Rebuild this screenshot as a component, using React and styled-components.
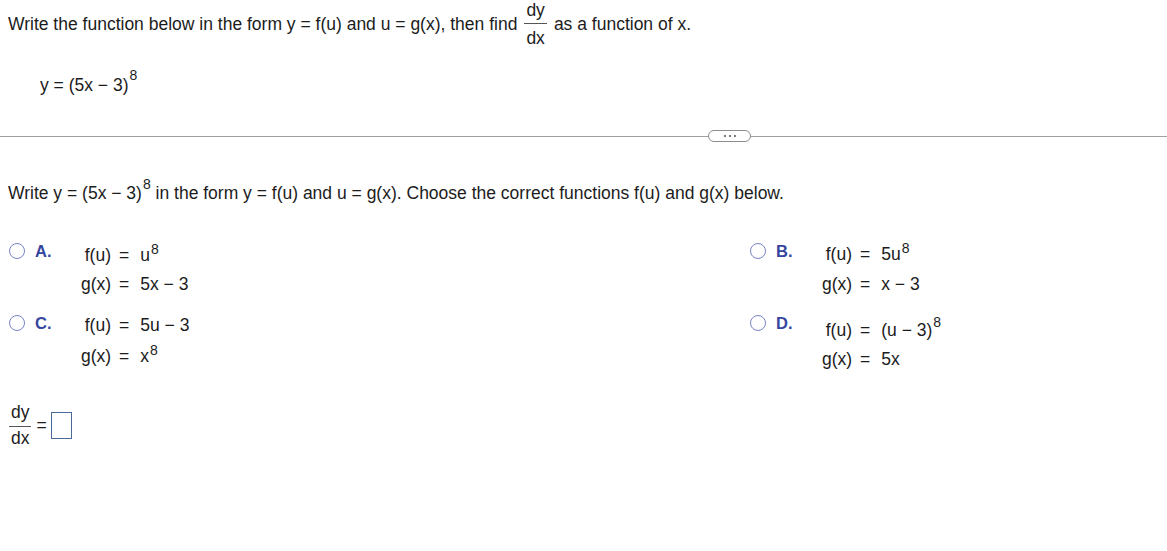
import React from "react";
import styled, { createGlobalStyle } from "styled-components";

const GlobalStyle = createGlobalStyle`
  html, body {
    margin: 0;
    padding: 0;
    background: #ffffff;
  }
  body {
    font-family: "Liberation Sans", Arial, sans-serif;
    font-size: 17.5px;
    color: #1c1c1c;
  }
`;

// top = offset of the f(u) line under the radio, gap = space between f and g lines
const getOptions = () => [
  { key: "A", top: 2, gap: 9, f: <>u<Sup>8</Sup></>, g: <>5x − 3</> },
  { key: "B", top: 1, gap: 10, f: <>5u<Sup>8</Sup></>, g: <>x − 3</> },
  { key: "C", top: 0, gap: 11, f: <>5u − 3</>, g: <>x<Sup>8</Sup></> },
  { key: "D", top: 5, gap: 9, f: <>(u − 3)<Sup $lift={9}>8</Sup></>, g: <>5x</> },
];

function Fraction({ top, bottom, small }) {
  return (
    <Frac>
      <FracTop $small={small}>{top}</FracTop>
      <FracBottom $small={small}>{bottom}</FracBottom>
    </Frac>
  );
}

const App = () => {
  const options = getOptions();
  return (
    <>
      <GlobalStyle />
      <Page>
        <Header>
          <Line>
            <span>Write the function below in the form y = f(u) and u = g(x), then find</span>
            <Fraction top="dy" bottom="dx" />
            <span>as a function of x.</span>
          </Line>
          <Given>
            y = (5x − 3)<Sup $lift={11}>8</Sup>
          </Given>
        </Header>

        <Divider>
          <Rule $w={708} />
          <MoreButton>
            <Dot />
            <Dot />
            <Dot />
          </MoreButton>
          <Rule />
        </Divider>

        <Body>
          <Prompt>
            Write y = (5x − 3)<Sup $lift={10}>8</Sup> in the form y = f(u) and u = g(x). Choose
            the correct functions f(u) and g(x) below.
          </Prompt>

          <Choices>
            {options.map((o) => (
              <Choice key={o.key}>
                <Radio />
                <Letter>{o.key}.</Letter>
                <Eqs $top={o.top} $gap={o.gap}>
                  <Lhs>f(u)</Lhs>
                  <Eq>=</Eq>
                  <Rhs>{o.f}</Rhs>
                  <Lhs>g(x)</Lhs>
                  <Eq>=</Eq>
                  <Rhs>{o.g}</Rhs>
                </Eqs>
              </Choice>
            ))}
          </Choices>

          <Answer>
            <Fraction top="dy" bottom="dx" small />
            <AnswerEq>=</AnswerEq>
            <AnswerBox />
          </Answer>
        </Body>
      </Page>
    </>
  );
};
export default App;

const Page = styled.div`
  width: 1167px;
  height: 551px;
  overflow: hidden;
`;

const Header = styled.div`
  padding: 0 0 0 8px;
`;

const Line = styled.div`
  display: flex;
  align-items: center;
  gap: 7px;
  height: 48px;
  white-space: nowrap;
`;

const Frac = styled.span`
  display: inline-flex;
  flex-direction: column;
  align-items: center;
  line-height: 20px;
`;

const FracTop = styled.span`
  padding: 0 2px ${(p) => (p.$small ? "4px" : "3px")};
  border-bottom: 1px solid #555;
`;

const FracBottom = styled.span`
  padding: ${(p) => (p.$small ? "1px" : "4px")} 2px 0;
`;

const Sup = styled.sup`
  font-size: 14px;
  vertical-align: ${(p) => p.$lift || 7}px;
  line-height: 0;
  margin-left: 1px;
`;

const Given = styled.div`
  margin-top: 27px;
  padding-left: 32px;
  line-height: 20px;
`;

const Divider = styled.div`
  display: flex;
  align-items: center;
  margin-top: 35px;
`;

const Rule = styled.div`
  flex: ${(p) => (p.$w ? `0 0 ${p.$w}px` : "1")};
  height: 1px;
  background: #a0a0a0;
`;

const MoreButton = styled.div`
  width: 41px;
  height: 10px;
  border: 1px solid #8c8c8c;
  border-radius: 6px;
  display: flex;
  align-items: center;
  justify-content: center;
  gap: 3px;
  background: #fff;
`;

const Dot = styled.span`
  width: 2px;
  height: 2px;
  background: #505050;
  border-radius: 1px;
`;

const Body = styled.div`
  padding: 0 0 0 8px;
`;

const Prompt = styled.div`
  margin-top: 41px;
  line-height: 20px;
  white-space: nowrap;
`;

const Choices = styled.div`
  display: grid;
  grid-template-columns: 741px 1fr;
  grid-auto-rows: 72px;
  margin-top: 40px;
`;

const Choice = styled.div`
  display: flex;
  align-items: flex-start;
`;

const Radio = styled.span`
  width: 14px;
  height: 14px;
  border: 1.7px solid #7884c6;
  border-radius: 50%;
  margin: 0 0 0 1px;
  flex-shrink: 0;
`;

const Letter = styled.span`
  color: #3646a0;
  font-weight: bold;
  font-size: 16.5px;
  line-height: 17px;
  margin-left: 10px;
  width: 46px;
  flex-shrink: 0;
`;

const Eqs = styled.div`
  display: grid;
  grid-template-columns: 30px auto auto;
  column-gap: 8px;
  row-gap: ${(p) => p.$gap}px;
  padding-top: ${(p) => p.$top}px;
`;

const Lhs = styled.span`
  text-align: right;
  line-height: 20px;
  white-space: nowrap;
`;

const Eq = styled.span`
  line-height: 20px;
  margin-right: 3px;
`;

const Rhs = styled.span`
  line-height: 20px;
  white-space: nowrap;
`;

const Answer = styled.div`
  display: flex;
  align-items: center;
  margin-top: 15px;
  margin-left: 1px;
`;

const AnswerEq = styled.span`
  margin: 0 4px 0 5px;
`;

const AnswerBox = styled.span`
  width: 19px;
  height: 25px;
  border: 1px solid #4a6a9a;
`;
